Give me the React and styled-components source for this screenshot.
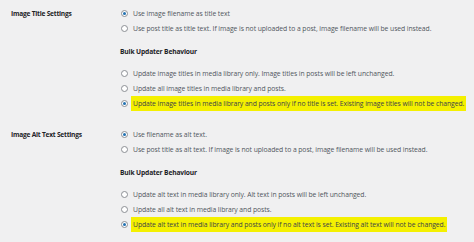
import styled, { createGlobalStyle } from 'styled-components'

const GlobalStyle = createGlobalStyle`
  html, body {
    margin: 0;
    padding: 0;
    background: #f0f0f1;
  }
  body {
    font-family: "Open Sans", "Noto Sans", sans-serif;
    width: 474px;
    height: 242px;
    overflow: hidden;
  }
`

const Page = styled.div`
  padding: 6px 0 0 11px;
`

const Section = styled.div`
  display: grid;
  grid-template-columns: 109px 1fr;
  margin-bottom: 16px;
`

const Label = styled.div`
  font-size: 6.6px;
  font-weight: 700;
  color: #1d2327;
  line-height: 15px;
  letter-spacing: -0.22px;
`

const Options = styled.div`
  display: flex;
  flex-direction: column;
`

const Heading = styled.div`
  font-size: 6.7px;
  font-weight: 700;
  color: #1d2327;
  line-height: 15px;
  letter-spacing: -0.15px;
  margin: 8px 0 7px 0;
`

const Row = styled.label`
  display: flex;
  align-items: center;
  height: 15px;
  font-size: 6.8px;
  color: #50575e;
  letter-spacing: -0.07px;
`

const Radio = styled.span`
  width: 7px;
  height: 7px;
  border-radius: 50%;
  border: 1px solid #8c8f94;
  background: #fff;
  box-sizing: border-box;
  display: flex;
  align-items: center;
  justify-content: center;
  flex: none;
  margin-right: 5px;
  margin-left: 1px;

  &::after {
    content: '';
    width: 3px;
    height: 3px;
    border-radius: 50%;
    background: ${p => (p.$checked ? '#2271b1' : 'transparent')};
  }
`

const Text = styled.span`
  background: ${p => (p.$highlight ? '#f4f000' : 'transparent')};
  color: ${p => (p.$highlight ? '#3c434a' : 'inherit')};
  padding: ${p => (p.$highlight ? '3px 2px' : '0')};
  margin-left: ${p => (p.$highlight ? '-2px' : '0')};
  white-space: nowrap;
`

const Option = ({ checked, highlight, children }) => (
  <Row>
    <Radio $checked={checked} />
    <Text $highlight={highlight}>{children}</Text>
  </Row>
)

const sections = [
  {
    label: 'Image Title Settings',
    main: [
      'Use image filename as title text',
      'Use post title as title text. If image is not uploaded to a post, image filename will be used instead.',
    ],
    bulk: [
      'Update image titles in media library only. Image titles in posts will be left unchanged.',
      'Update all image titles in media library and posts.',
      'Update image titles in media library and posts only if no title is set. Existing image titles will not be changed.',
    ],
  },
  {
    label: 'Image Alt Text Settings',
    main: [
      'Use filename as alt text.',
      'Use post title as alt text. If image is not uploaded to a post, image filename will be used instead.',
    ],
    bulk: [
      'Update alt text in media library only. Alt text in posts will be left unchanged.',
      'Update all alt text in media library and posts.',
      'Update alt text in media library and posts only if no alt text is set. Existing alt text will not be changed.',
    ],
  },
]

export default function App() {
  return (
    <>
      <GlobalStyle />
      <Page>
        {sections.map(s => (
          <Section key={s.label}>
            <Label>{s.label}</Label>
            <Options>
              {s.main.map((t, i) => (
                <Option key={t} checked={i === 0}>{t}</Option>
              ))}
              <Heading>Bulk Updater Behaviour</Heading>
              {s.bulk.map((t, i) => (
                <Option key={t} checked={i === 2} highlight={i === 2}>{t}</Option>
              ))}
            </Options>
          </Section>
        ))}
      </Page>
    </>
  )
}
